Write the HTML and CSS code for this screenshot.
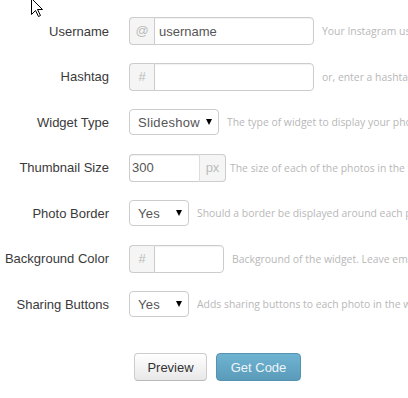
FILE: index.html
```html
<!DOCTYPE html>
<html lang="en">
<head>
  <meta charset="UTF-8" />
  <meta name="viewport" content="width=device-width, initial-scale=1" />
  <title>Instagram Widget</title>
  <link rel="stylesheet" href="styles.css">
</head>
<body>

  <svg class="cursor" width="13" height="20" viewBox="0 0 13 20">
    <polygon points="0.5,0.5 0.5,16.5 4.5,12.5 7.5,18.5 9.5,17.5 6.5,11.5 11.5,11.5" fill="#fff" stroke="#000" stroke-width="1" />
  </svg>

  <form class="settings">
    <div class="row">
      <label class="row-label">Username</label>
      <div class="group">
        <span class="addon">@</span><input class="field field-wide" type="text" value="username">
      </div>
      <span class="help">Your Instagram username</span>
    </div>

    <div class="row">
      <label class="row-label">Hashtag</label>
      <div class="group">
        <span class="addon">#</span><input class="field field-wide" type="text" value="">
      </div>
      <span class="help">or, enter a hashtag</span>
    </div>

    <div class="row">
      <label class="row-label">Widget Type</label>
      <span class="picker picker-wide">
        <select><option>Slideshow</option><option>Grid</option></select>
      </span>
      <span class="help">The type of widget to display your photos in.</span>
    </div>

    <div class="row">
      <label class="row-label">Thumbnail Size</label>
      <div class="group">
        <input class="field field-short field-first" type="text" value="300"><span class="addon addon-last">px</span>
      </div>
      <span class="help help-near">The size of each of the photos in the widget.</span>
    </div>

    <div class="row">
      <label class="row-label">Photo Border</label>
      <span class="picker">
        <select><option>Yes</option><option>No</option></select>
      </span>
      <span class="help">Should a border be displayed around each photo?</span>
    </div>

    <div class="row">
      <label class="row-label">Background Color</label>
      <div class="group">
        <span class="addon">#</span><input class="field field-short" type="text" value="">
      </div>
      <span class="help">Background of the widget. Leave empty for transparent.</span>
    </div>

    <div class="row">
      <label class="row-label">Sharing Buttons</label>
      <span class="picker">
        <select><option>Yes</option><option>No</option></select>
      </span>
      <span class="help">Adds sharing buttons to each photo in the widget.</span>
    </div>

    <div class="actions">
      <button type="button" class="btn btn-preview">Preview</button>
      <button type="button" class="btn btn-info">Get Code</button>
    </div>
  </form>

</body>
</html>
```

FILE: styles.css
```css
html, body {
  margin: 0;
  padding: 0;
  overflow: hidden;
  background: #fff;
}
body {
  font-family: "Liberation Sans", Arial, sans-serif;
  font-size: 13px;
  color: #333;
  position: relative;
}
.cursor {
  position: absolute;
  left: 31px;
  top: -2px;
}
.settings {
  padding-top: 17px;
  width: 408px;
}
.row {
  display: flex;
  align-items: center;
  height: 28px;
  margin-bottom: 17.5px;
  white-space: nowrap;
}
.row-label {
  width: 109px;
  flex: none;
  text-align: right;
  margin-right: 20px;
  color: #3a3a3a;
}
.group {
  display: flex;
  height: 28px;
  flex: none;
}
.addon {
  width: 24px;
  flex: none;
  background: #f5f5f5;
  border: 1px solid #ccc;
  border-right: 0;
  border-radius: 4px 0 0 4px;
  color: #bbb;
  text-align: center;
  line-height: 26px;
}
.addon-last {
  width: 25px;
  border-right: 1px solid #ccc;
  border-left: 1px solid #ddd;
  border-radius: 0 4px 4px 0;
}
.field {
  box-sizing: border-box;
  height: 28px;
  margin: 0;
  padding: 0 4px;
  border: 1px solid #ccc;
  border-radius: 0 4px 4px 0;
  box-shadow: inset 0 1px 1px rgba(0,0,0,0.06);
  font-family: "Liberation Sans", Arial, sans-serif;
  font-size: 13px;
  color: #555;
  outline: none;
}
.field-wide { width: 160px; }
.field-short { width: 70px; }
.field-first {
  border-radius: 4px 0 0 4px;
  border-right: 0;
  padding-left: 2px;
}
.picker {
  position: relative;
  flex: none;
  width: 60px;
  height: 26px;
}
.picker-wide { width: 90px; }
.picker select {
  appearance: none;
  -webkit-appearance: none;
  box-sizing: border-box;
  width: 100%;
  height: 26px;
  margin: 0;
  padding: 0 0 0 8px;
  border: 1px solid #ccc;
  border-radius: 4px;
  background: #fff;
  font-family: "Liberation Sans", Arial, sans-serif;
  font-size: 13px;
  color: #555;
  letter-spacing: 0.3px;
}
.picker::after {
  content: "";
  position: absolute;
  right: 7px;
  top: 10px;
  border-left: 3px solid transparent;
  border-right: 3px solid transparent;
  border-top: 6px solid #000;
  pointer-events: none;
}
.help {
  margin-left: 8px;
  font-family: "Open Sans", sans-serif;
  font-size: 10.4px;
  color: #b8b8b8;
}
.help-near { margin-left: 4px; }
.actions {
  display: flex;
  gap: 9px;
  padding-left: 134px;
  margin-top: 35px;
}
.btn {
  box-sizing: border-box;
  height: 28px;
  padding: 0;
  border: 1px solid #ccc;
  border-bottom-color: #b8b8b8;
  border-radius: 4px;
  background: linear-gradient(#ffffff, #e8e8e8);
  font-family: "Liberation Sans", Arial, sans-serif;
  font-size: 13px;
  color: #333;
  text-align: center;
}
.btn-preview { width: 73px; }
.btn-info {
  width: 85px;
  border-color: #5593b0;
  background: linear-gradient(#6fb3d2, #5a9bb9);
  color: #eef5f8;
}
```
